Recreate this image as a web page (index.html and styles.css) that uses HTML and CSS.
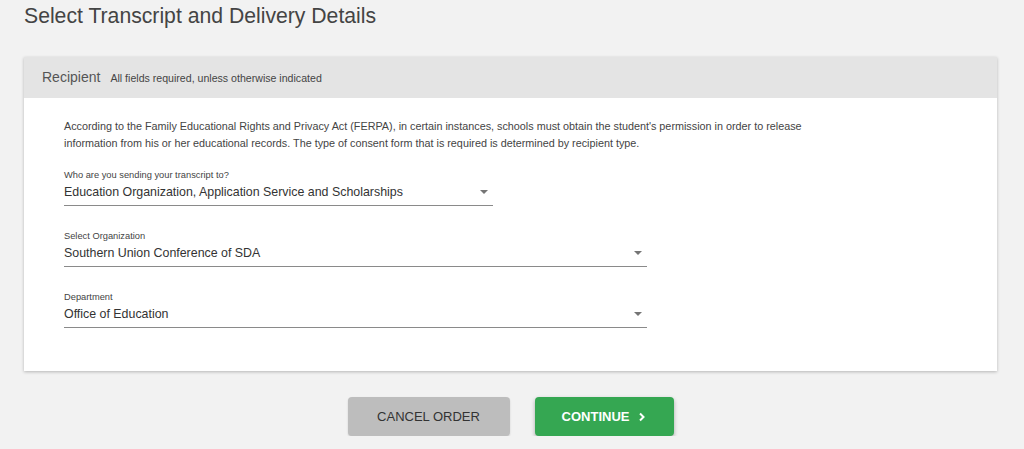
FILE: index.html
```html
<!DOCTYPE html>
<html lang="en">
<head>
<meta charset="utf-8">
<title>Select Transcript and Delivery Details</title>
<link rel="stylesheet" href="styles.css">
</head>
<body>
<main class="page">
  <h1 class="title">Select Transcript and Delivery Details</h1>
  <section class="card">
    <header class="card-head">
      <span class="card-title">Recipient</span>
      <span class="card-note">All fields required, unless otherwise indicated</span>
    </header>
    <div class="card-body">
      <p class="intro">According to the Family Educational Rights and Privacy Act (FERPA), in certain instances, schools must obtain the student's permission in order to release information from his or her educational records. The type of consent form that is required is determined by recipient type.</p>
      <div class="field field-short">
        <div class="field-label">Who are you sending your transcript to?</div>
        <div class="select">
          <span class="select-value">Education Organization, Application Service and Scholarships</span>
          <span class="caret"></span>
        </div>
      </div>
      <div class="field field-long">
        <div class="field-label">Select Organization</div>
        <div class="select">
          <span class="select-value">Southern Union Conference of SDA</span>
          <span class="caret"></span>
        </div>
      </div>
      <div class="field field-long">
        <div class="field-label">Department</div>
        <div class="select">
          <span class="select-value">Office of Education</span>
          <span class="caret"></span>
        </div>
      </div>
    </div>
  </section>
  <div class="actions">
    <button class="btn btn-cancel" type="button">CANCEL ORDER</button>
    <button class="btn btn-continue" type="button">CONTINUE
      <svg class="chev" width="8" height="10" viewBox="0 0 8 10"><path d="M2 1.5 L5.5 5 L2 8.5" fill="none" stroke="#fff" stroke-width="2"/></svg>
    </button>
  </div>
</main>
</body>
</html>
```
FILE: styles.css
```css
* { box-sizing: border-box; }
html, body { margin: 0; padding: 0; }
body {
  background: #f2f2f2;
  font-family: "Liberation Sans", Arial, sans-serif;
  color: #333;
}
.page {
  padding: 4px 27px 0 24px;
}
.title {
  margin: 0 0 29px 0;
  font-size: 21.2px;
  line-height: 24px;
  font-weight: normal;
  color: #444;
}
.card {
  background: #fff;
  box-shadow: 0 1px 3px rgba(0,0,0,0.25);
}
.card-head {
  height: 41px;
  background: #e4e4e4;
  display: flex;
  align-items: baseline;
  padding: 12px 18px 0;
  gap: 10px;
}
.card-title {
  font-size: 14px;
  color: #555;
}
.card-note {
  font-size: 10.6px;
  color: #444;
}
.card-body {
  padding: 20px 40px 43px;
}
.intro {
  margin: 0 0 17px 0;
  font-size: 10.8px;
  line-height: 17px;
  color: #444;
  max-width: 760px;
}
.field { margin-bottom: 24px; }
.field:last-child { margin-bottom: 0; }
.field-short { width: 429px; }
.field-long { width: 583px; }
.field-label {
  font-size: 9.3px;
  line-height: 12px;
  color: #444;
  margin-bottom: 2px;
}
.select {
  display: flex;
  align-items: center;
  justify-content: space-between;
  border-bottom: 1px solid #8a8a8a;
  padding-bottom: 4px;
}
.select-value {
  font-size: 12.4px;
  line-height: 18px;
  color: #333;
}
.caret {
  width: 0;
  height: 0;
  border-left: 4px solid transparent;
  border-right: 4px solid transparent;
  border-top: 4px solid #757575;
  margin-right: 5px;
}
.actions {
  display: flex;
  justify-content: center;
  gap: 25px;
  margin-top: 26px;
}
.btn {
  height: 39px;
  border: none;
  border-radius: 4px;
  font-family: "Liberation Sans", Arial, sans-serif;
  font-size: 13px;
  display: flex;
  align-items: center;
  justify-content: center;
  gap: 9px;
}
.btn-cancel {
  width: 162px;
  background: #bdbdbd;
  color: #333;
  box-shadow: 0 1px 2px rgba(0,0,0,0.15);
}
.btn-continue {
  width: 139px;
  background: #35a752;
  color: #fff;
  font-weight: bold;
  box-shadow: 0 2px 4px rgba(0,0,0,0.3);
}
.chev { display: block; }
```
